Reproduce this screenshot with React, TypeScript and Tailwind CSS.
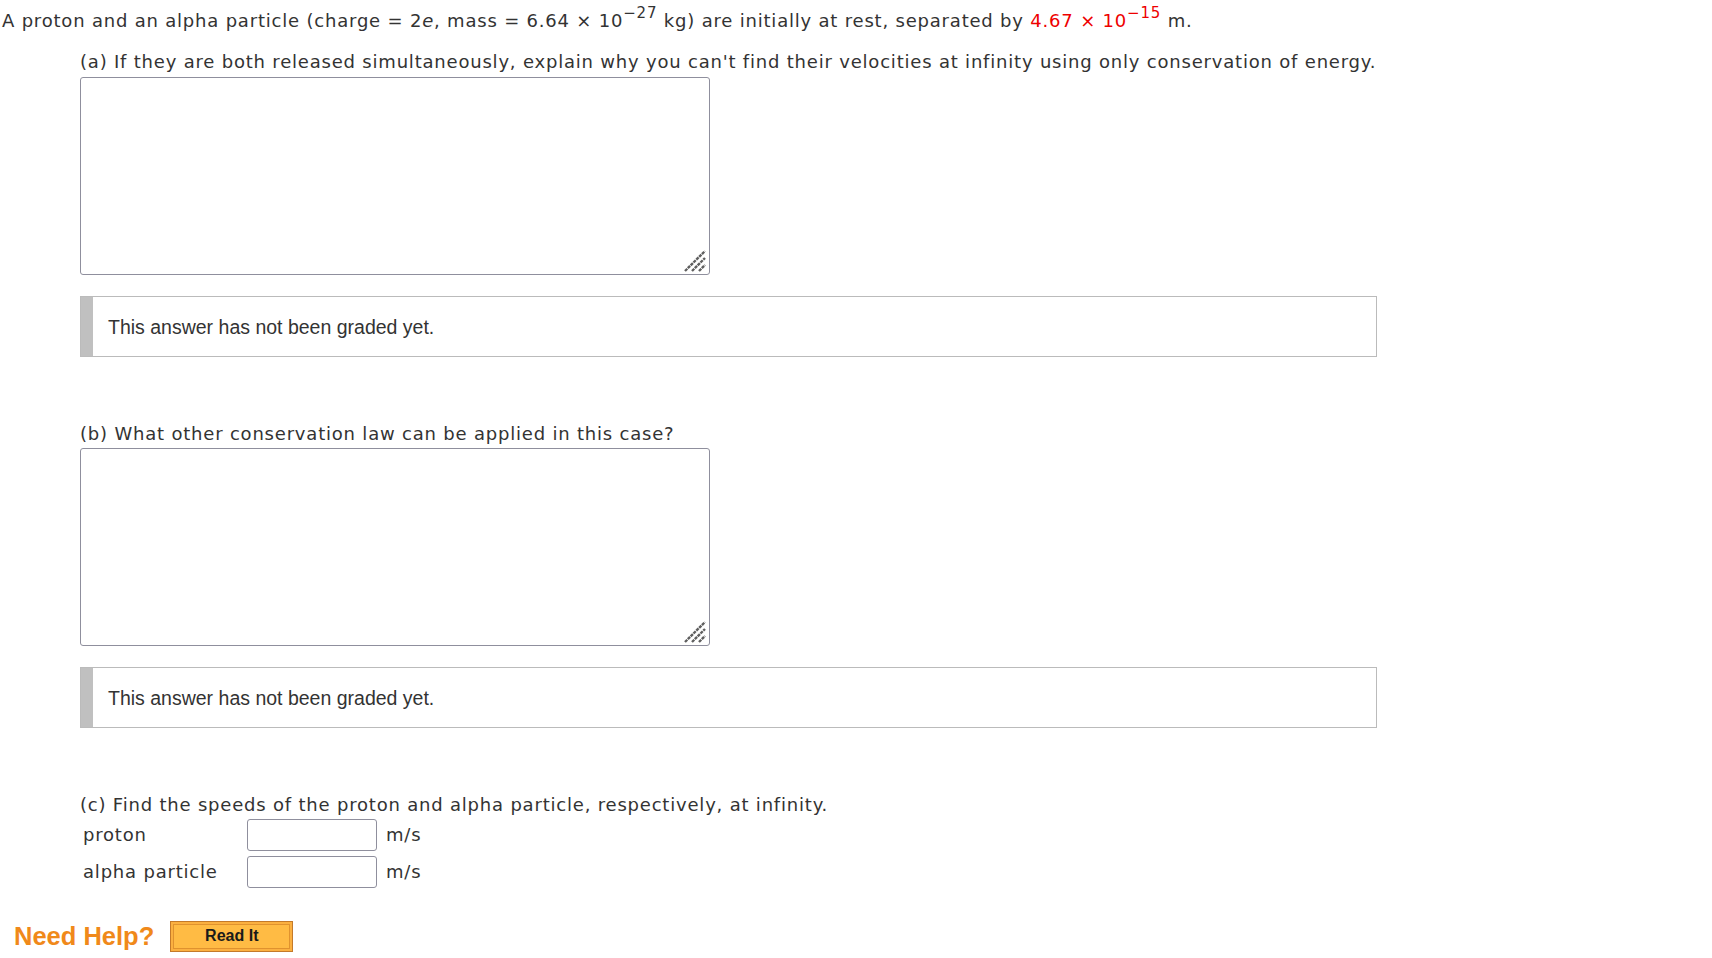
import React from "react";

const verdana = "font-['Verdana','DejaVu_Sans',sans-serif]";

function GradeNote() {
  return (
    <div className="flex h-[61px] w-[1297px] border border-[#bbbbbb] bg-white">
      <div className="w-[12px] shrink-0 bg-[#c0c0c0]" />
      <p className="flex items-center pl-[15px] font-['Liberation_Sans',Arial,sans-serif] text-[19.5px] tracking-normal text-[#333]">
        This answer has not been graded yet.
      </p>
    </div>
  );
}

// Textarea with the large striped resize grip drawn over its corner.
function AnswerBox() {
  return (
    <div className="relative h-[198px] w-[630px]">
      <textarea
        className="block h-full w-full resize-none rounded-[3px] border border-[#8f8f9d] bg-white outline-none"
        defaultValue=""
      />
      <svg
        className="pointer-events-none absolute bottom-[3px] right-[4px]"
        width="22"
        height="22"
        viewBox="0 0 22 22"
      >
        <g stroke="#5f5f5f" strokeWidth="2.4" strokeLinecap="butt" strokeDasharray="3.2 0.8">
          <line x1="1" y1="21" x2="21" y2="1" />
          <line x1="8" y1="21" x2="21" y2="8" />
          <line x1="15" y1="21" x2="21" y2="15" />
        </g>
      </svg>
    </div>
  );
}

function SpeedRow({ label, mt }: { label: string; mt: string }) {
  return (
    <div className={`flex items-center ${mt}`}>
      <span className="w-[167px] pl-[3px]">{label}</span>
      <input
        type="text"
        className="h-[32px] w-[130px] rounded-[3px] border border-[#8f8f9d] bg-white outline-none"
      />
      <span className="pl-[9px]">m/s</span>
    </div>
  );
}

export default function App() {
  return (
    <div className="min-h-screen bg-white pt-[9px] text-[#333]">
      <div className={`text-[18px] leading-[24px] tracking-[0.8px] ${verdana}`}>
        <p className="pl-[2px]">
          A proton and an alpha particle (charge = 2<i>e</i>, mass = 6.64 × 10
          <sup className="top-[-0.6em] text-[15px]">−27</sup> kg) are initially at rest, separated by{" "}
          <span className="text-[#ee0000]">
            4.67 × 10<sup className="top-[-0.6em] text-[15px]">−15</sup>
          </span>{" "}
          m.
        </p>

        <div className="pl-[80px]">
          <p className="mt-[17px] mb-[3px]">
            (a) If they are both released simultaneously, explain why you can't find their velocities at infinity using only conservation of energy.
          </p>
          <AnswerBox />
          <div className="mt-[21px]">
            <GradeNote />
          </div>

          <p className="mt-[65px] mb-[2px]">(b) What other conservation law can be applied in this case?</p>
          <AnswerBox />
          <div className="mt-[21px]">
            <GradeNote />
          </div>

          <p className="mt-[65px]">(c) Find the speeds of the proton and alpha particle, respectively, at infinity.</p>
          <SpeedRow label="proton" mt="mt-[2px]" />
          <SpeedRow label="alpha particle" mt="mt-[5px]" />
        </div>
      </div>

      <div className="mt-[29px] flex items-center pl-[14px]">
        <span className="font-['Liberation_Sans',Arial,sans-serif] text-[25.5px] font-bold text-[#f0891a]">
          Need Help?
        </span>
        <button
          type="button"
          className="ml-[16px] h-[31px] w-[123px] border border-[#c47a2a] bg-[#fbb040] p-[2px]"
        >
          <span className="flex h-full w-full items-center justify-center border border-[#e0922e] bg-[#ffbb44] font-['Liberation_Sans',Arial,sans-serif] text-[16px] font-bold text-[#1a1a1a]">
            Read It
          </span>
        </button>
      </div>
    </div>
  );
}
